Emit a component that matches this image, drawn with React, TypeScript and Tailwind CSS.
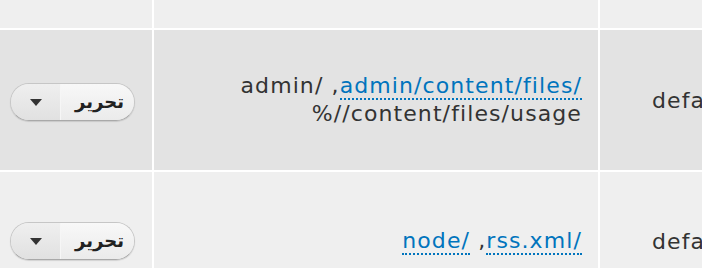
import React from 'react';

const font = { fontFamily: '"DejaVu Sans", "Noto Sans", sans-serif' };

const Link = ({ children }: { children: React.ReactNode }) => (
  <a href="#" className="text-[#0074bd] border-b-2 border-dotted border-[#0074bd] leading-none no-underline">
    {children}
  </a>
);

const DropButton = () => (
  <div className="flex h-[38px] w-[125px] rounded-full border border-[#c6c6c6] border-b-[#a9a9a9] shadow-[0_1px_1px_rgba(0,0,0,0.12)] overflow-hidden tracking-normal">
    <button className="flex w-[50px] items-center justify-center bg-gradient-to-b from-[#efefef] to-[#e1e1e1] border-r border-[#f6f6f6]">
      <span className="block h-0 w-0 border-l-[6px] border-r-[6px] border-t-[7px] border-l-transparent border-r-transparent border-t-[#333]" />
    </button>
    <a
      href="#"
      dir="rtl"
      className="flex flex-1 items-center justify-center bg-gradient-to-b from-[#f8f8f8] to-[#ebebeb] text-[18px] font-bold text-[#222] pb-[2px] pl-[4px]"
    >
      تحرير
    </a>
  </div>
);

export default function App() {
  return (
    <div className="w-[702px] h-[268px] overflow-hidden bg-white" style={font}>
      <div className="flex flex-col gap-[2px] w-[800px]">
        {/* tail of the previous row */}
        <div className="flex gap-[2px] h-[28px]">
          <div className="w-[152px] bg-[#efefef]" />
          <div className="w-[444px] bg-[#efefef]" />
          <div className="flex-1 bg-[#efefef]" />
        </div>

        <div className="flex gap-[2px] h-[140px] text-[22px] tracking-[1.1px] text-[#333]">
          <div className="w-[152px] bg-[#e3e3e3] flex items-center pl-[10px] pt-[4px]">
            <DropButton />
          </div>
          <div className="w-[444px] bg-[#e3e3e3] flex flex-col justify-center items-end pr-4 leading-[28px]">
            <div>
              admin/ ,<Link>admin/content/files/</Link>
            </div>
            <div>%//content/files/usage</div>
          </div>
          <div className="flex-1 bg-[#e3e3e3] flex items-center pl-[52px]">default</div>
        </div>

        <div className="flex gap-[2px] h-[138px] text-[22px] tracking-[1.1px] text-[#333]">
          <div className="w-[152px] bg-[#efefef] flex items-center pl-[10px]">
            <DropButton />
          </div>
          <div className="w-[444px] bg-[#efefef] flex items-center justify-end pr-4 leading-[28px]">
            <div>
              <Link>node/</Link> ,<Link>rss.xml/</Link>
            </div>
          </div>
          <div className="flex-1 bg-[#efefef] flex items-center pl-[52px]">default</div>
        </div>
      </div>
    </div>
  );
}
